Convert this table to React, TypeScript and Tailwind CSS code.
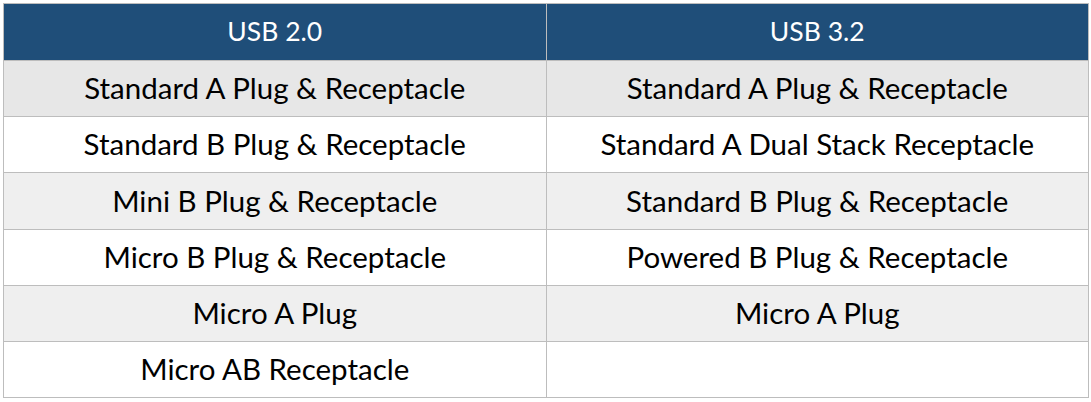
import React from "react";

const rows: [string, string][] = [
  ["Standard A Plug & Receptacle", "Standard A Plug & Receptacle"],
  ["Standard B Plug & Receptacle", "Standard A Dual Stack Receptacle"],
  ["Mini B Plug & Receptacle", "Standard B Plug & Receptacle"],
  ["Micro B Plug & Receptacle", "Powered B Plug & Receptacle"],
  ["Micro A Plug", "Micro A Plug"],
  ["Micro AB Receptacle", ""],
];

const rowCls = [
  "h-[56px] bg-[#e7e7e7]",
  "h-[56px] bg-white",
  "h-[57px] bg-[#efefef]",
  "h-[56px] bg-white",
  "h-[56px] bg-[#efefef]",
  "h-[56px] bg-white",
];

export default function App() {
  return (
    <div className="w-[1091px] h-[402px] bg-white pl-[3px] pt-[3px]" style={{ fontFamily: "Lato, 'Open Sans', sans-serif" }}>
      <table className="w-[1086px] border-collapse table-fixed">
        <thead>
          <tr className="h-[57px] bg-[#1f4e79] text-white text-[26.5px]">
            <th className="font-normal border border-[#bdbdbd] w-1/2">USB 2.0</th>
            <th className="font-normal border border-[#bdbdbd] w-1/2">USB 3.2</th>
          </tr>
        </thead>
        <tbody>
          {rows.map((r, i) => (
            <tr key={i} className={`${rowCls[i]} text-black text-[29.5px]`}>
              <td className="border border-[#bdbdbd] text-center">{r[0]}</td>
              <td className="border border-[#bdbdbd] text-center">{r[1]}</td>
            </tr>
          ))}
        </tbody>
      </table>
    </div>
  );
}
